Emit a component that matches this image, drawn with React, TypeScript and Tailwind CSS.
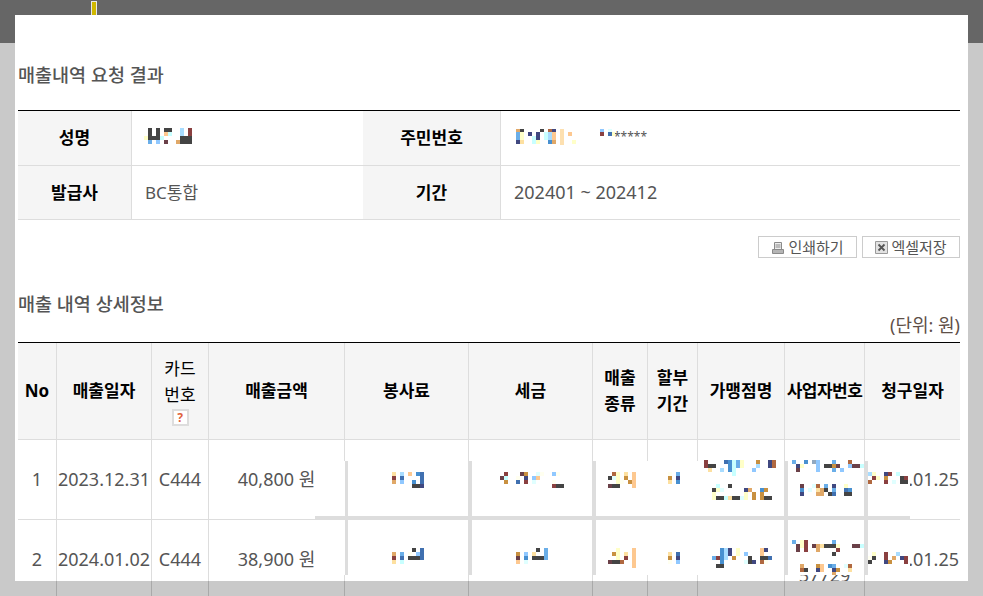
const BR = '#8a4040', DK = '#444444', NV = '#404880', BL = '#4070b0', MB = '#4890d0', SK = '#6aaee8', LB = '#90c8ff', PB = '#a8dcff'
const CY = '#c8ffff', IC = '#e0ffff', IV = '#fffff0', YL = '#ffffc8', CR = '#fde0a0', PE = '#fdc890', TN = '#e0a868', OC = '#c89040', RU = '#b06840', PL = '#6a4048'

// censored pixel blocks, page coordinates: x, y, w, h, colour
const BLOCKS: [number, number, number, number, string][] = [
  // name
  [148,128,4,12,DK],[144,136,4,4,YL],[148,140,4,4,SK],[152,136,4,4,DK],[156,128,4,12,DK],[156,140,4,4,LB],[160,136,4,4,CY],
  [164,128,8,4,DK],[164,132,4,4,PE],[168,132,4,4,CY],[164,140,4,4,PL],[176,140,4,4,TN],[180,128,4,8,PB],[180,136,12,8,DK],[188,128,4,8,BR],
  // id number
  [516,129,4,3,TN],[520,129,4,3,DK],[516,132,4,8,SK],[516,140,4,4,NV],[520,132,4,8,YL],[520,140,4,4,CR],[528,132,4,4,NV],[532,136,4,8,CY],
  [536,132,4,8,NV],[536,140,4,4,YL],[540,129,4,3,DK],[544,132,4,8,CY],[548,129,4,3,RU],[552,129,4,3,NV],[548,132,4,8,PB],[548,140,4,4,MB],
  [552,132,4,8,PE],[552,140,4,4,TN],[560,129,4,16,'#fde0b0'],[568,132,4,4,PE],[572,140,4,4,YL],
  [600,129,4,3,LB],[600,132,4,4,BR],[608,129,4,3,IC],[608,132,4,4,BL],[612,132,3,4,YL],
  // fee, row 1
  [392,472,4,4,CR],[392,476,4,4,BR],[392,480,4,4,TN],[400,472,4,4,PB],[400,476,4,4,BL],[400,480,4,4,LB],[408,472,4,4,PE],[416,472,4,4,MB],[412,480,4,4,MB],[420,472,4,12,BL],[412,484,8,4,DK],[420,484,4,4,NV],
  // tax, row 1
  [504,472,4,4,BR],[500,476,4,4,PL],[504,476,4,4,CY],[504,480,4,4,OC],[516,480,4,4,BL],[516,476,4,4,IV],[520,472,4,4,PL],[524,472,4,4,OC],[524,476,4,4,NV],[524,480,4,4,BR],
  [536,472,4,4,IC],[532,476,4,4,LB],[536,476,4,4,PE],[532,480,4,4,IC],[540,472,4,4,IV],[552,472,4,4,LB],[556,472,4,4,IV],[552,480,4,4,IV],[552,484,4,4,BR],[556,484,8,4,DK],
  // type, row 1
  [612,472,4,4,RU],[608,476,4,4,DK],[612,476,4,4,IC],[616,472,4,12,YL],[620,480,4,4,IV],[624,472,4,4,CR],[624,476,4,4,OC],[628,480,4,4,OC],[632,472,4,16,PE],[608,484,4,4,PL],[612,484,8,4,DK],
  // months, row 1
  [668,472,4,4,IV],[668,476,4,4,OC],[668,480,4,4,CR],[676,472,4,4,SK],[676,476,4,4,NV],[676,480,4,4,MB],
  // fee, row 2
  [392,552,4,4,TN],[392,556,4,4,BR],[392,560,4,4,CR],[400,552,4,4,SK],[400,556,4,4,BL],[400,560,4,4,CY],[412,548,4,4,DK],[408,552,4,4,IV],[416,552,4,4,LB],[420,548,4,12,BL],[408,556,12,4,DK],
  // tax, row 2
  [516,552,4,4,OC],[516,556,4,4,PL],[516,560,4,4,PE],[524,552,4,4,LB],[524,556,4,4,MB],[524,560,4,4,IC],[536,548,4,4,DK],[532,552,4,4,CR],[532,556,12,4,DK],[544,548,4,12,SK],
  // type, row 2
  [612,552,4,4,OC],[616,548,4,12,YL],[624,552,4,4,CR],[624,556,4,4,BR],[608,560,4,4,PL],[612,560,8,4,DK],[620,560,4,4,RU],[632,548,4,20,PE],
  // months, row 2
  [668,552,4,4,CR],[668,556,4,4,OC],[668,560,4,4,IV],[676,552,4,4,BL],[676,556,4,4,NV],[676,560,4,4,LB],
  // merchant, row 1
  [704,460,4,8,BR],[708,464,8,4,DK],[708,468,4,4,CR],[720,468,4,4,PB],[724,460,4,4,BL],[728,460,4,12,MB],[732,460,4,16,CY],[736,460,4,8,SK],[740,460,4,8,YL],[752,468,4,4,LB],[756,460,4,4,OC],[756,464,4,4,PB],[768,460,4,8,NV],[772,460,4,8,RU],
  [716,484,4,4,CY],[712,488,4,4,DK],[716,488,4,4,YL],[720,488,4,4,IC],[728,484,4,4,DK],[712,492,4,8,YL],[716,496,8,4,DK],[724,496,4,4,CY],[728,496,4,4,CR],[732,496,8,4,DK],[740,496,4,4,IC],[744,488,4,4,NV],[748,488,4,4,TN],[744,492,4,8,YL],[752,492,4,8,OC],[760,488,4,4,MB],[764,488,4,4,OC],[760,492,4,8,OC],[764,496,8,4,DK],
  // business number, row 1
  [792,460,4,4,SK],[796,464,4,4,NV],[796,468,4,4,PL],[800,464,4,4,YL],[804,460,4,4,MB],[812,460,4,4,'#90a8c0'],[816,460,4,12,LB],[824,464,8,4,DK],[832,460,4,4,SK],[832,464,4,4,OC],[832,468,4,4,SK],[836,464,4,4,PL],[840,468,4,4,LB],[848,460,4,4,RU],[848,464,4,4,LB],[852,464,8,4,PL],[860,464,4,4,CY],
  [800,484,4,4,PL],[800,488,4,4,MB],[800,492,4,4,NV],[808,488,4,4,IC],[812,484,4,4,IC],[816,484,4,4,RU],[816,488,4,4,CR],[820,488,4,4,TN],[816,492,8,4,TN],[824,484,4,4,SK],[824,488,4,4,DK],[828,492,4,4,DK],[832,484,4,4,NV],[832,488,4,4,SK],[832,492,4,4,BL],[844,484,4,4,YL],[844,488,4,4,BL],[848,488,4,4,MB],[844,492,8,4,DK],
  // date, row 1
  [868,472,4,4,PB],[872,472,4,4,YL],[872,476,4,4,BR],[868,480,4,4,RU],[876,476,4,4,YL],[884,472,4,4,NV],[888,472,4,4,BR],[884,476,4,4,OC],[884,480,4,4,BR],[896,472,4,4,CY],[892,480,4,4,IC],[900,476,4,8,DK],[904,476,4,4,BR],[904,480,4,4,DK],
  // merchant, row 2
  [712,556,4,4,SK],[716,556,4,4,BR],[720,548,4,16,MB],[724,548,4,12,PB],[728,548,4,8,NV],[736,548,4,8,YL],[732,556,4,4,OC],[716,564,8,4,DK],[744,552,4,4,LB],[744,560,4,4,IC],[748,556,4,8,DK],[752,560,4,4,NV],[760,548,4,8,PE],[764,548,4,4,NV],[760,556,8,4,DK],[768,556,4,4,BL],[760,560,4,4,RU],[764,560,4,4,IV],
  // business number, row 2
  [792,540,4,4,SK],[796,544,4,8,PL],[800,540,4,8,YL],[804,540,4,12,BR],[812,544,4,4,PL],[816,544,4,8,TN],[820,544,4,4,CR],[824,544,12,4,DK],[832,540,4,4,SK],[836,544,4,4,YL],[836,548,4,4,BR],[832,552,4,4,DK],[852,544,8,4,PL],[860,544,4,4,CY],
  [800,564,4,4,TN],[800,568,4,4,RU],[804,568,4,4,DK],[816,564,8,8,PE],[816,564,4,4,OC],[816,568,4,4,NV],[828,564,4,4,MB],[832,564,4,4,SK],[832,568,4,4,NV],[836,568,4,4,OC],[832,572,4,3,TN],[848,564,4,4,RU],[844,564,4,4,IC],[848,568,4,4,CR],
  // date, row 2
  [868,556,4,4,IV],[872,552,4,4,YL],[868,560,4,4,DK],[872,556,4,4,DK],[884,552,4,4,BR],[884,556,4,4,BR],[884,560,4,4,NV],[888,560,4,4,OC],[892,556,4,4,TN],[896,552,4,4,PB],[900,556,4,4,NV],[904,556,4,8,BR],
]

const FONT = 'font-["Noto_Sans","Noto_Sans_CJK_KR",sans-serif]'
const th = 'border-r border-b border-[#dddddd] bg-[#f5f5f5] text-center align-middle text-[17px] font-bold leading-[26px] text-black'
const td = 'border-r border-b border-[#dddddd] text-center text-[18px] text-[#555555] h-[80px] whitespace-nowrap overflow-hidden'
const COLS = [39, 95, 57, 136, 124, 124, 55, 50, 87, 80, 95]

export default function App() {
  return (
    <div className={`relative flex h-[596px] w-[983px] flex-col overflow-hidden bg-[#c9c9c9] ${FONT}`}>
      <div className="h-[43px] bg-[#666666]" />
      <div className="flex-1" />
      {/* page behind the dialog */}
      <div className="flex h-[15px] pl-[18px]">
        {COLS.slice(0, 10).map((w, i) => (
          <div key={i} className="border-r border-[#a9a9a9]" style={{ width: w }} />
        ))}
      </div>

      <div className="absolute left-[91px] top-px h-[14px] w-[6px] border border-b-0 border-[#e8e8e8] bg-[#d0b800]" />

      {/* Dialog */}
      <div className="absolute left-[15px] top-[15px] h-[566px] w-[953px] overflow-hidden bg-white pl-[3px] pr-[8px]">
        <h2 className="mt-[46px] h-[28px] text-[18.5px] font-medium leading-[28px] text-[#555555]">매출내역 요청 결과</h2>

        <table className="mt-[21px] w-[942px] table-fixed border-separate border-spacing-0 border-t border-black">
          <colgroup>
            <col className="w-[114px]" />
            <col className="w-[231px]" />
            <col className="w-[138px]" />
            <col />
          </colgroup>
          <tbody>
            <tr className="h-[55px]">
              <th className="border-r border-b border-[#dddddd] bg-[#f5f5f5] text-[17px] font-bold text-black">성명</th>
              <td className="border-b border-[#dddddd]" />
              <th className="border-r border-b border-[#dddddd] bg-[#f5f5f5] text-[17px] font-bold text-black">주민번호</th>
              <td className="border-b border-[#dddddd] pb-[3px] pl-[113px] text-[12px] leading-none text-[#555555]">*****</td>
            </tr>
            <tr className="h-[54px]">
              <th className="border-r border-b border-[#dddddd] bg-[#f5f5f5] text-[17px] font-bold text-black">발급사</th>
              <td className="border-b border-[#dddddd] pl-[13px] text-[17px] text-[#555555]">BC통합</td>
              <th className="border-r border-b border-[#dddddd] bg-[#f5f5f5] text-[17px] font-bold text-black">기간</th>
              <td className="border-b border-[#dddddd] pl-[13px] text-[18px] text-[#555555]">202401 ~ 202412</td>
            </tr>
          </tbody>
        </table>

        <div className="mt-[16px] flex justify-end gap-[5px]">
          <button className="flex h-[22px] w-[99px] items-center justify-center gap-[3px] border border-[#cccccc] text-[15px] leading-none text-[#555555]">
            <svg width="14" height="14" viewBox="0 0 14 14" className="mt-px">
              <path d="M3.5 1.5h7v7h-7z M4.5 4h5 M4.5 6h5" fill="#eeeeee" stroke="#8a8a8a" />
              <path d="M1.5 8.5h11v4h-11z" fill="#b5b5b5" stroke="#8a8a8a" />
            </svg>
            인쇄하기
          </button>
          <button className="flex h-[22px] w-[98px] items-center justify-center gap-[3px] border border-[#cccccc] text-[15px] leading-none text-[#555555]">
            <svg width="13" height="13" viewBox="0 0 13 13" className="mt-px">
              <path d="M.5.5h12v12H.5z" fill="#e2e2e2" stroke="#9a9a9a" />
              <path d="M3.5 3.5l6 6 M9.5 3.5l-6 6" stroke="#555555" strokeWidth="1.8" />
            </svg>
            엑셀저장
          </button>
        </div>

        <h2 className="mt-[32px] h-[25px] text-[18.5px] font-medium leading-[28px] text-[#555555]">매출 내역 상세정보</h2>
        <p className="h-[20px] text-right text-[18px] leading-[20px] text-[#5f5048]">(단위: 원)</p>

        <table className="mt-[7px] w-[942px] table-fixed border-separate border-spacing-0 border-t border-black">
          <colgroup>
            {COLS.map((w, i) => (
              <col key={i} style={{ width: w }} />
            ))}
          </colgroup>
          <thead>
            <tr className="h-[97px]">
              <th className={th}>No</th>
              <th className={th}>매출일자</th>
              <th className={`${th} !font-normal`}>
                카드<br />번호
                <span className="mx-auto mt-[1px] flex h-[17px] w-[17px] items-center justify-center border-2 border-[#dddddd] bg-white text-[12px] font-bold leading-none text-[#e0623c]">?</span>
              </th>
              <th className={th}>매출금액</th>
              <th className={th}>봉사료</th>
              <th className={th}>세금</th>
              <th className={th}>매출<br />종류</th>
              <th className={th}>할부<br />기간</th>
              <th className={th}>가맹점명</th>
              <th className={`${th} tracking-[-0.5px]`}>사업자번호</th>
              <th className={`${th} border-r-0`}>청구일자</th>
            </tr>
          </thead>
          <tbody>
            <tr>
              <td className={td}>1</td>
              <td className={td}>2023.12.31</td>
              <td className={td}>C444</td>
              <td className={td}>40,800 원</td>
              <td className={td} />
              <td className={td} />
              <td className={td} />
              <td className={td} />
              <td className={td} />
              <td className={td} />
              <td className={`${td} border-r-0 pr-px text-right`}>2024.01.25</td>
            </tr>
            <tr>
              <td className={td}>2</td>
              <td className={td}>2024.01.02</td>
              <td className={td}>C444</td>
              <td className={td}>38,900 원</td>
              <td className={td} />
              <td className={td} />
              <td className={td} />
              <td className={td} />
              <td className={td} />
              <td className={`${td} whitespace-normal align-top pt-[42px] leading-[26px]`}>57729</td>
              <td className={`${td} border-r-0 pr-px text-right`}>2024.01.25</td>
            </tr>
          </tbody>
        </table>
      </div>

      {/* Masking patch drawn over the lower rows */}
      <div className="absolute left-[316px] top-[461px] h-[114px] w-[594px] bg-white" />
      <div className="absolute left-[345px] top-[461px] h-[114px] w-[3px] bg-[#dddddd]" />
      <div className="absolute left-[468px] top-[461px] h-[114px] w-[4px] bg-[#dddddd]" />
      <div className="absolute left-[592px] top-[461px] h-[114px] w-[4px] bg-[#dddddd]" />
      <div className="absolute left-[784px] top-[461px] h-[114px] w-[4px] bg-[#dddddd]" />
      <div className="absolute left-[864px] top-[461px] h-[114px] w-[4px] bg-[#dddddd]" />
      <div className="absolute left-[315px] top-[516px] h-[4px] w-[595px] bg-[#dddddd]" />

      <svg className="pointer-events-none absolute left-0 top-0" width="983" height="596" shapeRendering="crispEdges">
        {BLOCKS.map(([x, y, w, h, c], i) => (
          <rect key={i} x={x} y={y} width={w} height={h} fill={c} />
        ))}
      </svg>
    </div>
  )
}
